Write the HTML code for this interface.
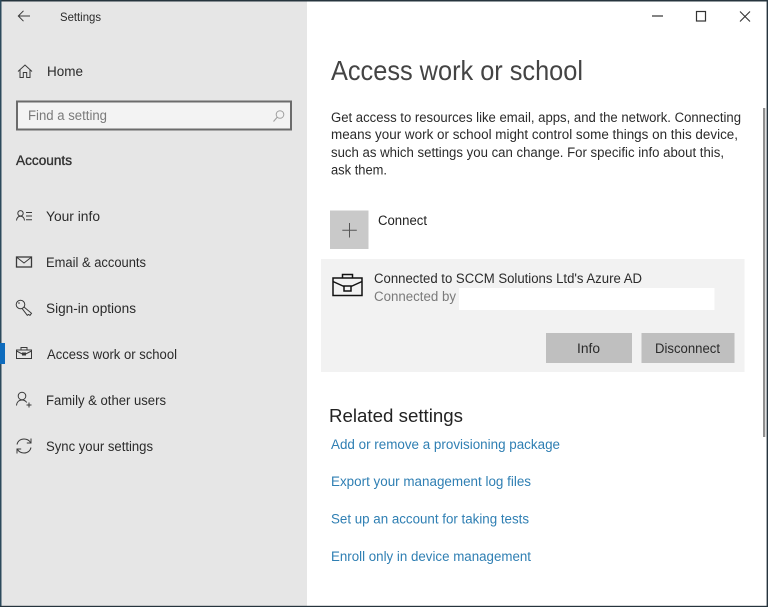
<!DOCTYPE html>
<html><head><meta charset="utf-8"><style>
html,body{margin:0;padding:0;background:#fff}
svg{display:block;filter:blur(.3px)}
text{font-family:"Liberation Sans",sans-serif;font-size:13.5px;fill:#2b2b2b;white-space:pre}
.i{fill:none;stroke:#3a3a3a;stroke-width:1}
</style></head><body>
<svg width="768" height="607" viewBox="0 0 768 607" xmlns="http://www.w3.org/2000/svg">
<rect width="768" height="607" fill="#fff"/>
<rect x="1" y="0" width="306" height="607" fill="#e6e6e6"/>
<rect x="0" y="0" width="768" height="1.5" fill="#26343d"/>
<rect x="0" y="0" width="1.5" height="607" fill="#2c4a5c"/>
<rect x="766.6" y="0" width="1.4" height="607" fill="#26343d"/>
<rect x="0" y="605.8" width="768" height="1.2" fill="#26343d"/>

<path class="i" d="M30 16H18.500M23.500 10.800L18.300 16L23.500 21.200"/>
<text x="60" y="21" textLength="41" lengthAdjust="spacingAndGlyphs" style="font-size:12px">Settings</text>

<path class="i" d="M18 71.500L25 65L32 71.500M20 70V77.500H23.300V72.500H26.700V77.500H30V70"/>
<text x="47" y="76" textLength="36" lengthAdjust="spacingAndGlyphs">Home</text>

<rect x="17" y="101.500" width="274" height="28" fill="#f3f3f3" stroke="#6b6b6b" stroke-width="2"/>
<text x="28" y="120" textLength="79" lengthAdjust="spacingAndGlyphs" style="fill:#7a7a7a">Find a setting</text>
<circle cx="280" cy="114.500" r="3.800" fill="none" stroke="#a0a0a0" stroke-width="1"/>
<path d="M277.200 117.300L273.500 121.500" stroke="#a0a0a0" stroke-width="1.100" fill="none"/>

<text x="16" y="165" textLength="56" lengthAdjust="spacingAndGlyphs" style="fill:#333;stroke:#333;stroke-width:.35px">Accounts</text>

<!-- your info -->
<circle cx="20.500" cy="213.300" r="2.700" class="i"/>
<path class="i" d="M16.500 220.500C16.800 217.500 18.500 216.200 20.500 216.200C22.500 216.200 24.200 217.500 24.500 220.500M26 212.500H32M26 216H32M26 219.800H32"/>
<text x="46" y="221" textLength="54" lengthAdjust="spacingAndGlyphs">Your info</text>

<!-- email -->
<rect x="16.500" y="257" width="15" height="10" class="i" style="stroke-width:1.300"/>
<path class="i" d="M17 257.500L24 263L31 257.500"/>
<text x="46" y="267" textLength="100" lengthAdjust="spacingAndGlyphs">Email &amp; accounts</text>

<!-- key -->
<circle cx="20.500" cy="304.500" r="4.300" class="i"/>
<circle cx="19" cy="303" r=".8" fill="#3a3a3a"/>
<path class="i" d="M24 307L31.500 313.300L30 315.300L28.500 314.500L27.300 315.300L22.300 308.800"/>
<text x="46" y="313" textLength="90" lengthAdjust="spacingAndGlyphs">Sign-in options</text>

<!-- active -->
<rect x="0" y="343" width="5" height="21" fill="#0f6cbd"/>
<path class="i" d="M16.500 350H31.500V358.500H16.500ZM21 350V347.500H27V350M16.500 351L22.300 354H25.700L31.500 351M22.500 353H25.500V355H22.500Z"/>
<text x="47" y="359" textLength="130" lengthAdjust="spacingAndGlyphs">Access work or school</text>

<!-- family -->
<circle cx="22" cy="396" r="3.800" class="i"/>
<path class="i" d="M16.500 405.500C16.800 402 19 400 22 400C24 400 25.700 401 26.700 402.500M29 402.500V407.500M26.500 405H31.500"/>
<text x="46" y="405" textLength="120" lengthAdjust="spacingAndGlyphs">Family &amp; other users</text>

<!-- sync -->
<path class="i" d="M17 444.500C17.800 441 20.500 439 24 439C27 439 29.300 440.500 30.500 442.500M31 438.500V443H26.800M31 447.500C30.200 451 27.500 453 24 453C21 453 18.700 451.500 17.500 449.500M17 453.500V449H21.200"/>
<text x="46" y="451" textLength="107" lengthAdjust="spacingAndGlyphs">Sync your settings</text>

<!-- window buttons -->
<path d="M652 16H663" stroke="#333" stroke-width="1.200"/>
<rect x="696.500" y="11.500" width="9" height="9.500" fill="none" stroke="#333" stroke-width="1.200"/>
<path d="M740 11.500L750 21.500M750 11.500L740 21.500" stroke="#333" stroke-width="1.100"/>

<!-- scrollbar -->
<rect x="763" y="108" width="2.300" height="329" fill="#8f8f8f"/>

<text x="331" y="80" textLength="252" lengthAdjust="spacingAndGlyphs" style="font-size:28px;fill:#444">Access work or school</text>

<text x="331" y="122" textLength="410" lengthAdjust="spacingAndGlyphs">Get access to resources like email, apps, and the network. Connecting</text>
<text x="331" y="139" textLength="407" lengthAdjust="spacingAndGlyphs">means your work or school might control some things on this device,</text>
<text x="331" y="157" textLength="393" lengthAdjust="spacingAndGlyphs">such as which settings you can change. For specific info about this,</text>
<text x="331" y="174.500" textLength="56" lengthAdjust="spacingAndGlyphs">ask them.</text>

<rect x="330" y="210.500" width="38.500" height="38.500" fill="#c9c9c9"/>
<path d="M349.500 223V237.500M342.300 230.300H356.800" stroke="#555" stroke-width="1"/>
<text x="378" y="225" textLength="49" lengthAdjust="spacingAndGlyphs" style="fill:#222">Connect</text>

<rect x="321" y="259" width="423.500" height="113" fill="#f2f2f2"/>
<path d="M333 278H362V295.500H333ZM342.500 278V274.500H352.500V278M333 281.500L344 286.500M362 281.500L351 286.500M344 286H351V291H344Z" fill="none" stroke="#111" stroke-width="1.500"/>
<text x="374" y="283" textLength="268" lengthAdjust="spacingAndGlyphs">Connected to SCCM Solutions Ltd's Azure AD</text>
<text x="374" y="301" textLength="82" lengthAdjust="spacingAndGlyphs" style="fill:#7a7a7a">Connected by</text>
<rect x="459" y="288" width="255.500" height="22" fill="#fff"/>

<rect x="546" y="333" width="86" height="30" fill="#bfbfbf"/>
<rect x="641.500" y="333" width="93" height="30" fill="#bfbfbf"/>
<text x="577" y="353" textLength="23" lengthAdjust="spacingAndGlyphs">Info</text>
<text x="655" y="353" textLength="65" lengthAdjust="spacingAndGlyphs">Disconnect</text>

<text x="329" y="422" textLength="134" lengthAdjust="spacingAndGlyphs" style="font-size:18.500px;fill:#222">Related settings</text>
<text x="331" y="449" textLength="229" lengthAdjust="spacingAndGlyphs" style="fill:#2f7fb3">Add or remove a provisioning package</text>
<text x="331" y="486" textLength="200" lengthAdjust="spacingAndGlyphs" style="fill:#2f7fb3">Export your management log files</text>
<text x="331" y="523.500" textLength="198" lengthAdjust="spacingAndGlyphs" style="fill:#2f7fb3">Set up an account for taking tests</text>
<text x="331" y="561" textLength="200" lengthAdjust="spacingAndGlyphs" style="fill:#2f7fb3">Enroll only in device management</text>
</svg>
</body></html>
